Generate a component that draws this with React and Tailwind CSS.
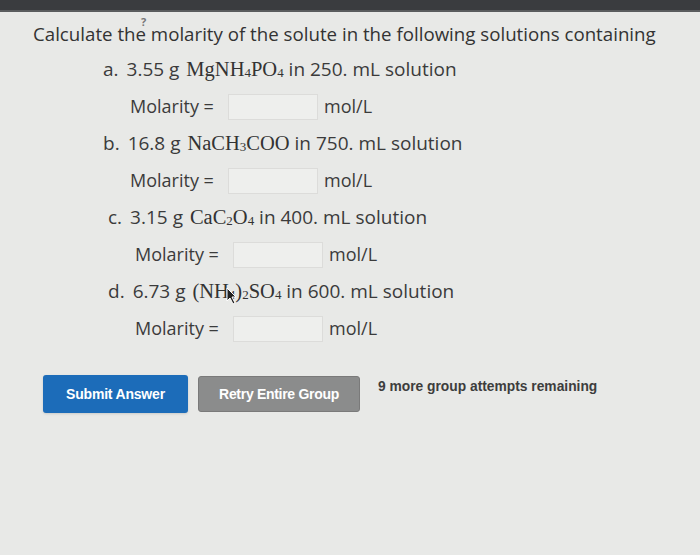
import React from 'react';

const sans = { fontFamily: '"Open Sans", "Liberation Sans", sans-serif' };
const serif = { fontFamily: '"Liberation Serif", "Times New Roman", serif' };
const btn = { fontFamily: '"Liberation Sans", Arial, sans-serif' };

const Sub = ({ children }) => <sub className="text-[13px] relative top-[1px] align-baseline">{children}</sub>;

const items = [
  { key: 'a', mass: '3.55', formula: <>MgNH<Sub>4</Sub>PO<Sub>4</Sub></>, vol: '250.', pad: 'pl-[70px]' },
  { key: 'b', mass: '16.8', formula: <>NaCH<Sub>3</Sub>COO</>, vol: '750.', pad: 'pl-[70px]' },
  { key: 'c', mass: '3.15', formula: <>CaC<Sub>2</Sub>O<Sub>4</Sub></>, vol: '400.', pad: 'pl-[75px]' },
  { key: 'd', mass: '6.73', formula: <>(NH<Sub>4</Sub>)<Sub>2</Sub>SO<Sub>4</Sub></>, vol: '600.', pad: 'pl-[75px]' },
];

const Item = ({ item }) => (
  <div className={`${item.pad} text-[18px] text-[#3b3b3b]`}>
    <div className="h-[37px] flex items-center gap-[8px] text-[19px]">
      <span>{item.key}.</span>
      <span className="whitespace-nowrap">
        {item.mass} g <span style={serif} className="text-[20.5px] text-[#333] ml-[2px]">{item.formula}</span> in {item.vol} mL solution
      </span>
    </div>
    <div className="h-[37px] flex items-center pl-[27px]">
      <span className="w-[98px]">Molarity =</span>
      <div className="w-[90px] h-[26px] bg-[#eeefed] border border-[#dcdcda]" />
      <span className="ml-[6px]">mol/L</span>
    </div>
  </div>
);

export default function App() {
  return (
    <div className="w-[700px] h-[555px] bg-[#e8e9e7] overflow-hidden relative" style={sans}>
      <div className="h-[12px] bg-[#3a3c3f] border-b-2 border-[#5a5c5e]" />
      <div className="px-[33px] pt-[9px]">
        <div className="text-[18.7px] text-[#333] leading-[26px] whitespace-nowrap">
          Calculate the molarity of the solute in the following solutions containing
        </div>
        <div className="mt-[4px] flex flex-col">
          {items.map((it) => (
            <Item key={it.key} item={it} />
          ))}
        </div>
        <div className="mt-[28px] pl-[10px] flex items-center gap-[10px]" style={btn}>
          <button className="w-[145px] h-[38px] rounded-[3px] bg-[#1c6cb9] text-white text-[14px] font-bold tracking-[-0.2px] shadow-sm">
            Submit Answer
          </button>
          <button className="w-[162px] h-[36px] rounded-[3px] bg-[#8b8c8c] border border-[#7a7a7a] text-white text-[14px] font-bold tracking-[-0.3px]">
            Retry Entire Group
          </button>
          <span className="ml-[8px] mb-[14px] text-[13.8px] font-bold text-[#3d3d3d]">9 more group attempts remaining</span>
        </div>
      </div>
      <span className="absolute left-[141px] top-[14px] text-[11px] font-bold text-[#777]">?</span>
      <svg className="absolute left-[226px] top-[287px]" width="12" height="18" viewBox="0 0 12 18">
        <path d="M1 1 L1 14 L4 11 L7 17 L9 16 L6 10 L10 10 Z" fill="#222" stroke="#fff" strokeWidth="1" />
      </svg>
    </div>
  );
}
